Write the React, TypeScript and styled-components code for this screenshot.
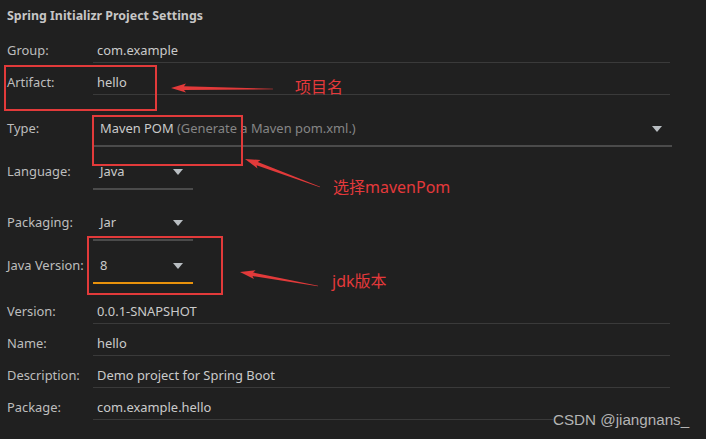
import React from "react";
import styled, { createGlobalStyle } from "styled-components";

const GlobalStyle = createGlobalStyle`
  html, body {
    margin: 0;
    padding: 0;
    background: #202020;
  }
  body {
    font-family: "Noto Sans", "Open Sans", sans-serif;
  }
`;

const Page = styled.div`
  position: relative;
  width: 706px;
  height: 439px;
  overflow: hidden;
  background: #202020;
  padding: 0 0 0 7px;
  box-sizing: border-box;
`;

const Title = styled.div`
  height: 31px;
  line-height: 31px;
  font-size: 12.4px;
  font-weight: 700;
  color: #c6c6c6;
`;

// every row: top spacing, then a 20px text line, then the underline
const Row = styled.div<{ $pt: number }>`
  display: grid;
  grid-template-columns: 86px 1fr;
  padding-top: ${(p) => p.$pt + 1}px;
  font-size: 12.9px;
`;

const Label = styled.div`
  line-height: 20px;
  color: #bdbdbd;
`;

const Field = styled.div<{ $w: number; $pb: number; $line: string; $thick?: number }>`
  position: relative;
  width: ${(p) => p.$w}px;
  line-height: 20px;
  padding: 0 0 ${(p) => p.$pb - 1}px 4px;
  box-sizing: border-box;
  border-bottom: ${(p) => p.$thick ?? 1}px solid ${(p) => p.$line};
  color: #cacaca;
  white-space: nowrap;
`;

const Select = styled(Field)`
  padding-left: 7px;
`;

const Hint = styled.span`
  color: #858585;
`;

const Caret = styled.span`
  position: absolute;
  right: 10px;
  top: 8px;
  width: 0;
  height: 0;
  border-left: 5px solid transparent;
  border-right: 5px solid transparent;
  border-top: 6px solid #b9bec2;
`;

const Mark = styled.div<{ $x: number; $y: number; $w: number; $h: number }>`
  position: absolute;
  left: ${(p) => p.$x}px;
  top: ${(p) => p.$y}px;
  width: ${(p) => p.$w}px;
  height: ${(p) => p.$h}px;
  border: 2px solid #e23a3a;
  box-sizing: border-box;
`;

const Note = styled.span<{ $x: number; $y: number }>`
  position: absolute;
  left: ${(p) => p.$x}px;
  top: ${(p) => p.$y}px;
  font-family: "Noto Sans", "Noto Sans CJK SC", sans-serif;
  font-size: 16px;
  line-height: 20px;
  color: #e4393b;
  white-space: nowrap;
`;

const ArrowLayer = styled.svg`
  position: absolute;
  left: 0;
  top: 0;
  pointer-events: none;
`;

const Watermark = styled.span`
  position: absolute;
  left: 553px;
  top: 410px;
  font-family: "Liberation Sans", Arial, sans-serif;
  font-size: 15.2px;
  line-height: 20px;
  color: #b4b4b4;
  background: #202020;
  padding-right: 2px;
  white-space: nowrap;
`;

type Pt = [number, number];

function arrowPoints(tail: Pt, tip: Pt) {
  const dx = tip[0] - tail[0];
  const dy = tip[1] - tail[1];
  const len = Math.hypot(dx, dy);
  const ux = dx / len;
  const uy = dy / len;
  const nx = -uy;
  const ny = ux;
  const head = 15;
  const bx = tip[0] - ux * head;
  const by = tip[1] - uy * head;
  const pts: Pt[] = [
    tip,
    [bx + nx * 4.5, by + ny * 4.5],
    [bx + ux * 2 + nx * 1.8, by + uy * 2 + ny * 1.8],
    [tail[0] + nx * 0.3, tail[1] + ny * 0.3],
    [tail[0] - nx * 0.3, tail[1] - ny * 0.3],
    [bx + ux * 2 - nx * 1.8, by + uy * 2 - ny * 1.8],
    [bx - nx * 4.5, by - ny * 4.5],
  ];
  return pts.map((p) => p.map((v) => v.toFixed(1)).join(",")).join(" ");
}

const arrows: { tail: Pt; tip: Pt }[] = [
  { tail: [273, 89], tip: [171, 88] },
  { tail: [320, 187], tip: [245, 159] },
  { tail: [318, 286], tip: [240, 272] },
];

const LINE = "#3a3a3a";
const SELECT_LINE = "#4b4b4b";

export default function App() {
  return (
    <>
      <GlobalStyle />
      <Page>
        <Title>Spring Initializr Project Settings</Title>

        <Row $pt={8}>
          <Label>Group:</Label>
          <Field $w={577} $pb={3} $line={LINE}>com.example</Field>
        </Row>
        <Row $pt={8}>
          <Label>Artifact:</Label>
          <Field $w={577} $pb={3} $line={LINE}>hello</Field>
        </Row>
        <Row $pt={22}>
          <Label>Type:</Label>
          <Select $w={579} $pb={8} $line={SELECT_LINE} $thick={2}>
            Maven POM <Hint>(Generate a Maven pom.xml.)</Hint>
            <Caret />
          </Select>
        </Row>
        <Row $pt={13}>
          <Label>Language:</Label>
          <Select $w={100} $pb={8} $line={SELECT_LINE} $thick={2}>
            Java
            <Caret />
          </Select>
        </Row>
        <Row $pt={21}>
          <Label>Packaging:</Label>
          <Select $w={100} $pb={8} $line={SELECT_LINE} $thick={2}>
            Jar
            <Caret />
          </Select>
        </Row>
        <Row $pt={13}>
          <Label>Java Version:</Label>
          <Select $w={100} $pb={8} $line="#e8920c" $thick={2}>
            8
            <Caret />
          </Select>
        </Row>
        <Row $pt={16}>
          <Label>Version:</Label>
          <Field $w={577} $pb={3} $line={LINE}>0.0.1-SNAPSHOT</Field>
        </Row>
        <Row $pt={8}>
          <Label>Name:</Label>
          <Field $w={577} $pb={3} $line={LINE}>hello</Field>
        </Row>
        <Row $pt={8}>
          <Label>Description:</Label>
          <Field $w={577} $pb={3} $line={LINE}>Demo project for Spring Boot</Field>
        </Row>
        <Row $pt={8}>
          <Label>Package:</Label>
          <Field $w={577} $pb={3} $line={LINE}>com.example.hello</Field>
        </Row>

        <Mark $x={4} $y={65} $w={153} $h={46} />
        <Mark $x={92} $y={115} $w={151} $h={51} />
        <Mark $x={87} $y={236} $w={136} $h={59} />

        <ArrowLayer width={706} height={439}>
          {arrows.map((a, i) => (
            <polygon key={i} points={arrowPoints(a.tail, a.tip)} fill="#e23a3a" />
          ))}
        </ArrowLayer>

        <Note $x={295} $y={77}>项目名</Note>
        <Note $x={333} $y={177}>选择mavenPom</Note>
        <Note $x={332} $y={271}>jdk版本</Note>

        <Watermark>CSDN @jiangnans_</Watermark>
      </Page>
    </>
  );
}
